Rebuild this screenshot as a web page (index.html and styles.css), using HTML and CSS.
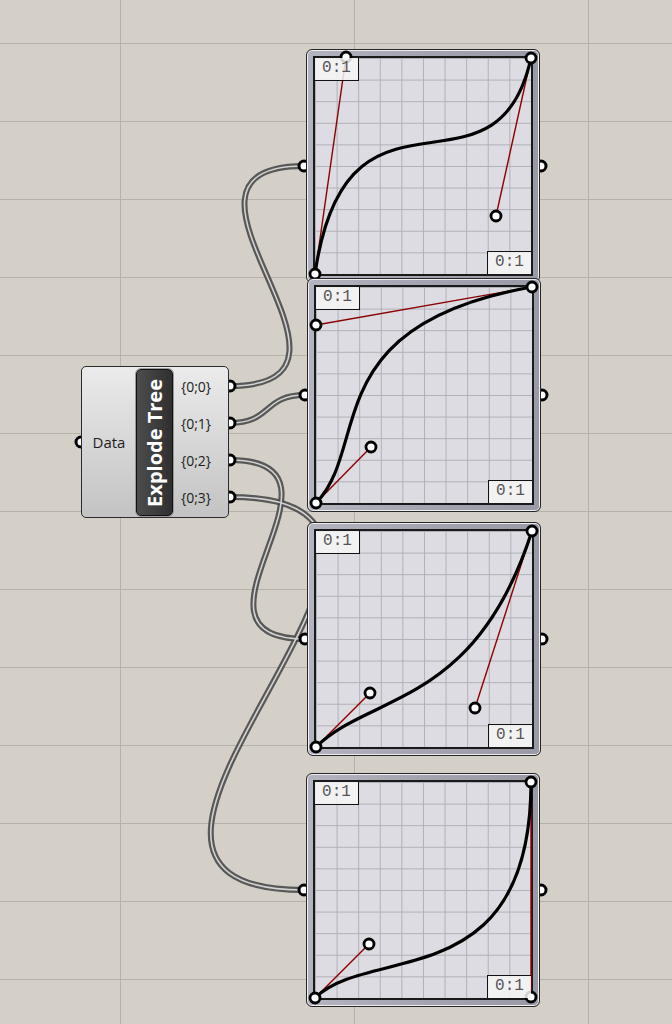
FILE: index.html
```html
<!DOCTYPE html>
<html lang="en">
<head>
    <meta charset="UTF-8">
    <meta name="viewport" content="width=device-width, initial-scale=1.0">
    <title>Explode Tree / Graph Mapper</title>
    <link rel="stylesheet" href="styles.css">
</head>
<body>
    <div class="canvas">
        <!-- wires and grips sit underneath the components -->
        <svg class="wires" width="672" height="1024" viewBox="0 0 672 1024">
            <defs>
                <path id="w1" d="M230,386 C400,386 134,166 304,166"/>
                <path id="w2" d="M230,423 C272,423 263,395 305,395"/>
                <path id="w3" d="M230,460 C370,460 165,639 305,639"/>
                <path id="w4" d="M230,497 C520,497 14,890 304,890"/>
            </defs>
            <g class="wire-outer">
                <use href="#w1"/><use href="#w2"/><use href="#w3"/><use href="#w4"/>
            </g>
            <g class="wire-inner">
                <use href="#w1"/><use href="#w2"/><use href="#w3"/><use href="#w4"/>
            </g>
            <g class="grips">
                <circle cx="81" cy="442" r="5"/>
                <circle cx="230" cy="386" r="5"/>
                <circle cx="230" cy="423" r="5"/>
                <circle cx="230" cy="460" r="5"/>
                <circle cx="230" cy="497" r="5"/>

                <circle cx="304" cy="166" r="5"/>
                <circle cx="541" cy="166" r="5"/>
                <circle cx="305" cy="395" r="5"/>
                <circle cx="542" cy="395" r="5"/>
                <circle cx="305" cy="639" r="5"/>
                <circle cx="542" cy="639" r="5"/>
                <circle cx="304" cy="890" r="5"/>
                <circle cx="541" cy="890" r="5"/>
            </g>
        </svg>

        <div class="component explode">
            <div class="inputs"><span>Data</span></div>
            <div class="capsule"><span>Explode Tree</span></div>
            <div class="outputs">
                <span>{0;0}</span>
                <span>{0;1}</span>
                <span>{0;2}</span>
                <span>{0;3}</span>
            </div>
        </div>

        <div class="mapper mapper-1">
            <div class="plot">
                <svg width="216" height="216" viewBox="0 0 216 216">
                    <line class="handle" x1="0" y1="216" x2="31" y2="-1"/>
                    <line class="handle" x1="216" y1="0" x2="181" y2="158"/>
                    <path class="curve" d="M0,216 C31,-1 181,158 216,0"/>
                    <circle class="pt" cx="0" cy="216" r="5"/>
                    <circle class="pt" cx="216" cy="0" r="5"/>
                    <circle class="pt" cx="31" cy="-1" r="5"/>
                    <circle class="pt" cx="181" cy="158" r="5"/>
                </svg>
                <span class="tag tag-top">0:1</span>
                <span class="tag tag-bottom">0:1</span>
            </div>
        </div>

        <div class="mapper mapper-2">
            <div class="plot">
                <svg width="216" height="216" viewBox="0 0 216 216">
                    <line class="handle" x1="0" y1="216" x2="55" y2="160"/>
                    <line class="handle" x1="216" y1="0" x2="0" y2="38"/>
                    <path class="curve" d="M0,216 C55,160 0,38 216,0"/>
                    <circle class="pt" cx="0" cy="216" r="5"/>
                    <circle class="pt" cx="216" cy="0" r="5"/>
                    <circle class="pt" cx="55" cy="160" r="5"/>
                    <circle class="pt" cx="0" cy="38" r="5"/>
                </svg>
                <span class="tag tag-top">0:1</span>
                <span class="tag tag-bottom">0:1</span>
            </div>
        </div>

        <div class="mapper mapper-3">
            <div class="plot">
                <svg width="216" height="216" viewBox="0 0 216 216">
                    <line class="handle" x1="0" y1="216" x2="54" y2="162"/>
                    <line class="handle" x1="216" y1="0" x2="159" y2="177"/>
                    <path class="curve" d="M0,216 C54,162 159,177 216,0"/>
                    <circle class="pt" cx="0" cy="216" r="5"/>
                    <circle class="pt" cx="216" cy="0" r="5"/>
                    <circle class="pt" cx="54" cy="162" r="5"/>
                    <circle class="pt" cx="159" cy="177" r="5"/>
                </svg>
                <span class="tag tag-top">0:1</span>
                <span class="tag tag-bottom">0:1</span>
            </div>
        </div>

        <div class="mapper mapper-4">
            <div class="plot">
                <svg width="216" height="216" viewBox="0 0 216 216">
                    <line class="handle" x1="0" y1="216" x2="54" y2="162"/>
                    <line class="handle" x1="216" y1="0" x2="216" y2="215"/>
                    <path class="curve" d="M0,216 C54,162 216,215 216,0"/>
                    <circle class="pt" cx="0" cy="216" r="5"/>
                    <circle class="pt" cx="216" cy="0" r="5"/>
                    <circle class="pt" cx="54" cy="162" r="5"/>
                    <circle class="pt" cx="216" cy="215" r="5"/>
                </svg>
                <span class="tag tag-top">0:1</span>
                <span class="tag tag-bottom">0:1</span>
            </div>
        </div>
    </div>
</body>
</html>
```

FILE: styles.css
```css
body {
    margin: 0;
    background-color: #d4d0c8;
}
.canvas {
    position: relative;
    width: 672px;
    height: 1024px;
    overflow: hidden;
    background-color: #d4d0c8;
    background-image:
        linear-gradient(to right, #b6b2aa 1px, transparent 1px),
        linear-gradient(to bottom, #b6b2aa 1px, transparent 1px);
    background-size: 234px 78px;
    background-position: 120px 43px;
}

/* wires */
.wires {
    position: absolute;
    left: 0;
    top: 0;
}
.wire-outer use {
    fill: none;
    stroke: #4a4a4a;
    stroke-width: 6;
    stroke-opacity: 0.9;
}
.wire-inner use {
    fill: none;
    stroke: #d2d2d2;
    stroke-width: 1.6;
}
.grips circle {
    fill: #fff;
    stroke: #000;
    stroke-width: 3;
}

/* explode tree component */
.component {
    position: absolute;
    box-sizing: border-box;
    border: 1px solid #2b2b2b;
    border-radius: 5px;
    background: linear-gradient(#ebebeb, #c3c3c3);
    display: flex;
    font-family: "Open Sans", "Noto Sans", sans-serif;
    color: #1e1e1e;
}
.explode {
    left: 81px;
    top: 366px;
    width: 148px;
    height: 152px;
}
.inputs {
    width: 54px;
    display: flex;
    align-items: center;
    justify-content: center;
    font-size: 15px;
}
.capsule {
    width: 37px;
    margin: 2px 0 1px;
    box-sizing: border-box;
    border: 1px solid #111;
    border-radius: 5px;
    background: linear-gradient(to right, #4d4d4d, #2f2f2f);
    box-shadow: 0 0 0 1px #9a9a9a;
    display: flex;
    align-items: center;
    justify-content: center;
}
.capsule span {
    writing-mode: vertical-rl;
    transform: rotate(180deg);
    color: #fff;
    font-weight: 700;
    font-size: 20px;
    line-height: 1;
}
.outputs {
    flex: 1;
    display: flex;
    flex-direction: column;
    padding-top: 1px;
}
.outputs span {
    height: 37px;
    line-height: 37px;
    text-align: center;
    padding-right: 9px;
    font-size: 14px;
}

/* graph mappers */
.mapper {
    position: absolute;
    width: 234px;
    height: 234px;
    box-sizing: border-box;
    padding: 6px;
    border: 1px solid #262626;
    border-radius: 6px;
    background: linear-gradient(to right, #b4b4c0, #a4a4b0 50%, #9a9aa6);
    box-shadow: inset 0 0 0 1px #ededf2;
}
.mapper-1 { left: 306px; top: 49px; }
.mapper-2 { left: 307px; top: 278px; }
.mapper-3 { left: 307px; top: 522px; }
.mapper-4 { left: 306px; top: 773px; }

.plot {
    position: relative;
    width: 216px;
    height: 216px;
    border: 2px solid #1a1a1a;
    background-color: #dcdce2;
    background-image:
        linear-gradient(to right, #b0b0b8 1px, transparent 1px),
        linear-gradient(to bottom, #b0b0b8 1px, transparent 1px);
    background-size: 21.6px 21.6px;
}
.plot svg {
    display: block;
    overflow: visible;
}
.handle {
    stroke: #8c0000;
    stroke-width: 1.4;
}
.curve {
    fill: none;
    stroke: #000;
    stroke-width: 3.2;
}
.pt {
    fill: #fff;
    stroke: #000;
    stroke-width: 2.8;
}
.tag {
    position: absolute;
    width: 44px;
    height: 23px;
    box-sizing: border-box;
    background: rgba(246, 246, 246, 0.85);
    font-family: "Liberation Mono", monospace;
    font-size: 16px;
    line-height: 21px;
    text-align: center;
    color: #555;
}
.tag-top {
    left: 0;
    top: 0;
    border-right: 1.5px solid #111;
    border-bottom: 1.5px solid #111;
}
.tag-bottom {
    right: 0;
    bottom: 0;
    border-left: 1.5px solid #111;
    border-top: 1.5px solid #111;
}
```
